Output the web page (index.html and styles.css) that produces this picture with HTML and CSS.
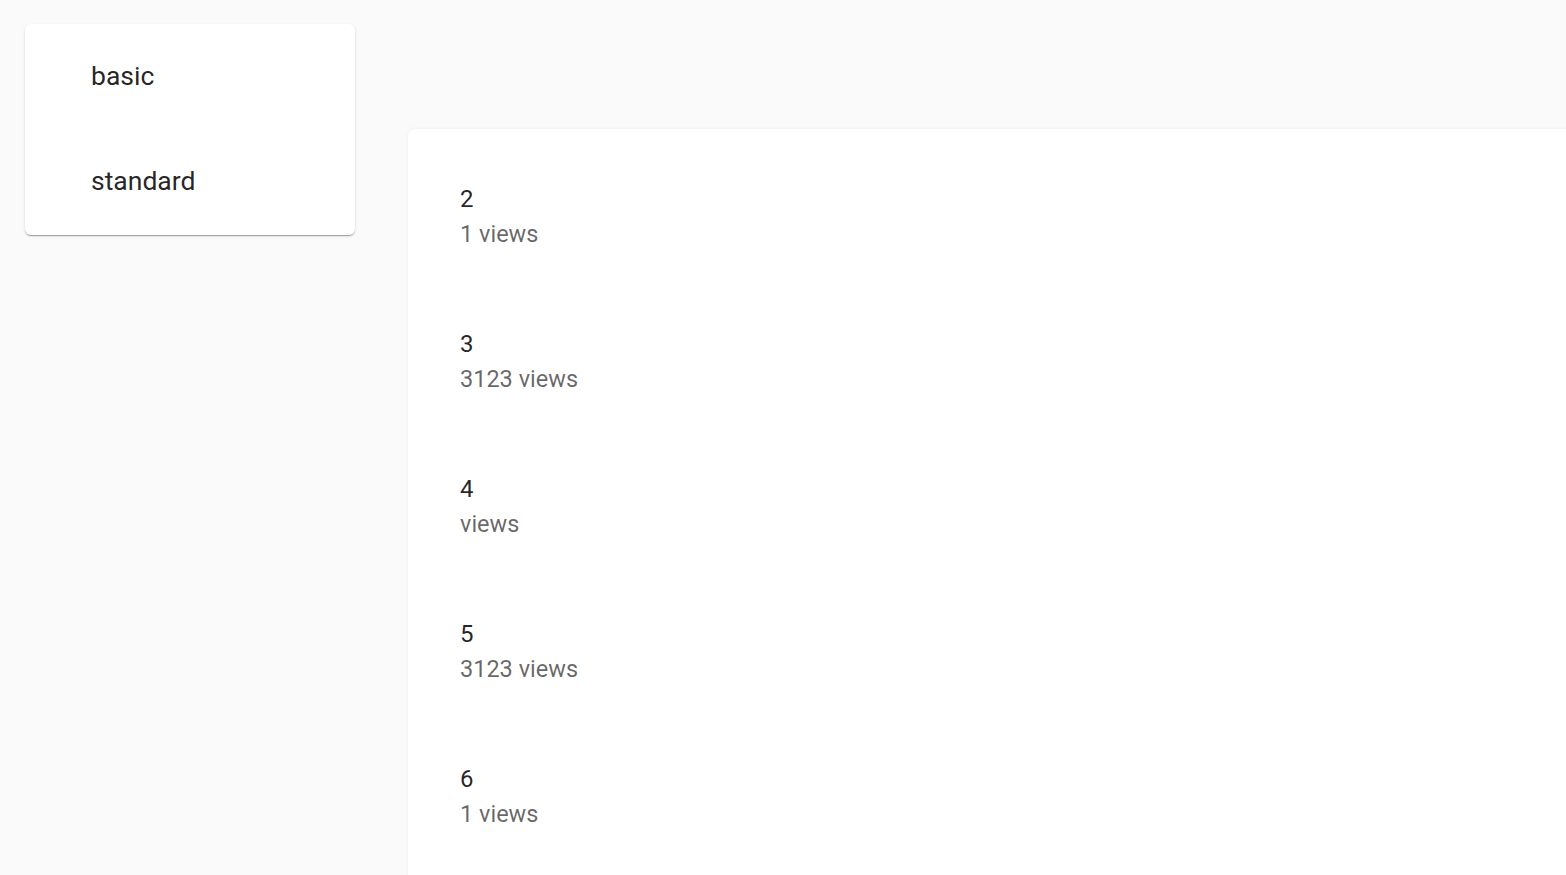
FILE: index.html
```html
<!DOCTYPE html>
<html lang="en">
<head>
    <meta charset="UTF-8">
    <meta name="viewport" content="width=device-width, initial-scale=1.0">
    <title>Lists</title>
    <link rel="stylesheet" href="styles.css">
</head>
<body>
    <div class="page">
        <nav class="menu-card">
            <ul class="menu-list">
                <li class="menu-item">basic</li>
                <li class="menu-item">standard</li>
            </ul>
        </nav>

        <main class="panel">
            <ul class="view-list">
                <li class="view-item">
                    <span class="primary">2</span>
                    <span class="secondary">1 views</span>
                </li>
                <li class="view-item">
                    <span class="primary">3</span>
                    <span class="secondary">3123 views</span>
                </li>
                <li class="view-item">
                    <span class="primary">4</span>
                    <span class="secondary">views</span>
                </li>
                <li class="view-item">
                    <span class="primary">5</span>
                    <span class="secondary">3123 views</span>
                </li>
                <li class="view-item">
                    <span class="primary">6</span>
                    <span class="secondary">1 views</span>
                </li>
            </ul>
        </main>
    </div>
</body>
</html>
```

FILE: styles.css
```css
html, body {
    height: 100%;
}
body {
    margin: 0;
    padding: 0;
    background-color: #fafafa;
    font-family: Roboto, "Liberation Sans", Arial, sans-serif;
    color: rgba(0, 0, 0, 0.87);
    overflow: hidden;
}
.page {
    display: flex;
    align-items: flex-start;
    padding: 24px 0 0 25px;
    height: 100%;
    box-sizing: border-box;
}
ul {
    list-style: none;
    margin: 0;
    padding: 0;
}
.menu-card {
    flex: 0 0 330px;
    height: 211px;
    background-color: #fff;
    border-radius: 6px;
    box-shadow: 0 2px 1px -1px rgba(0, 0, 0, 0.2), 0 1px 1px 0 rgba(0, 0, 0, 0.14), 0 1px 3px 0 rgba(0, 0, 0, 0.12);
}
.menu-item {
    display: flex;
    align-items: center;
    box-sizing: border-box;
    height: 105px;
    padding: 0 0 2px 66px;
    font-size: 26.5px;
    line-height: 1.5;
}
.panel {
    flex: 0 0 1170px;
    margin: 105px 0 0 53px;
    height: 900px;
    background-color: #fff;
    border-radius: 8px 0 0 0;
    box-shadow: 0 0 4px rgba(0, 0, 0, 0.06);
    padding: 14px 0 0 52px;
    box-sizing: border-box;
}
.view-item {
    display: flex;
    flex-direction: column;
    justify-content: center;
    height: 145px;
}
.primary {
    font-size: 24px;
    line-height: 36px;
}
.secondary {
    font-size: 23.5px;
    line-height: 34px;
    color: rgba(0, 0, 0, 0.6);
}
```
